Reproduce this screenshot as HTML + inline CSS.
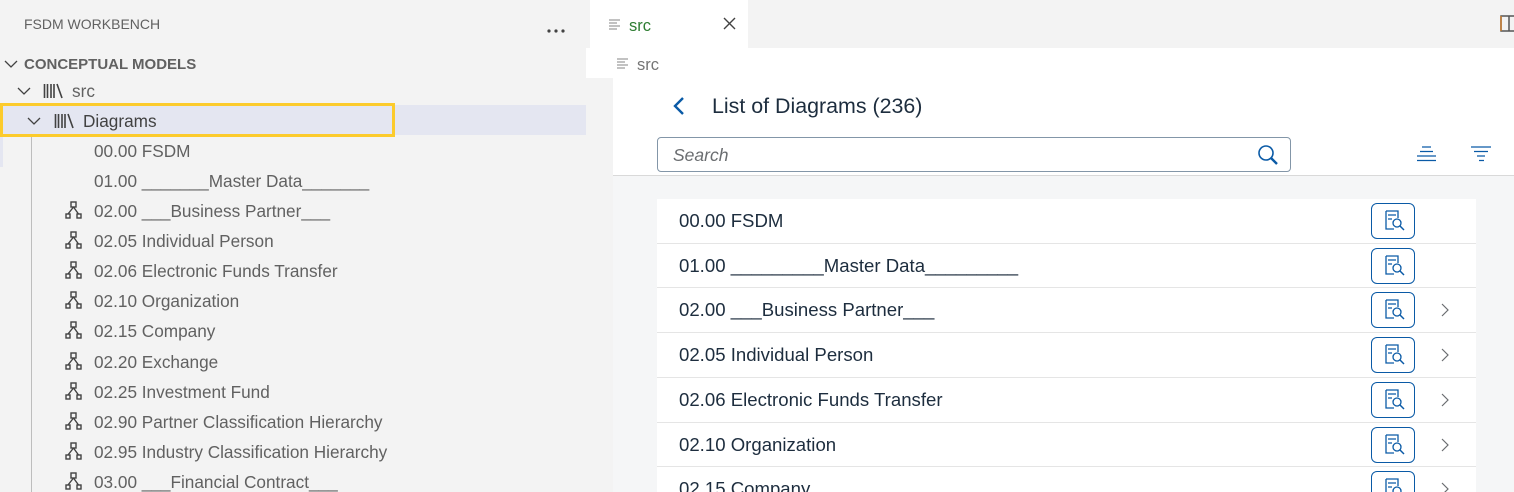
<!DOCTYPE html>
<html><head><meta charset="utf-8"><style>
*{margin:0;padding:0;box-sizing:border-box}
html,body{width:1514px;height:492px;overflow:hidden}
body{background:#f3f3f3;font-family:"Liberation Sans",sans-serif;position:relative}
.a{position:absolute;white-space:nowrap}
.side{position:absolute;left:0;top:0;width:586px;height:492px;background:#f3f3f3;overflow:hidden}
.t{position:absolute;font-size:17.2px;color:#616161;line-height:30px;white-space:nowrap}
.ic{position:absolute}
.row{position:absolute;left:657px;width:819px;background:#fff;border-bottom:1px solid #e5e5e5}
.row span{position:absolute;left:22px;top:11px;font-size:18.6px;color:#1d2d3e}
.btn{position:absolute;left:714px;top:4px;width:44px;height:36px;border:1px solid #0a5aa6;border-radius:6px}
.chev{position:absolute;left:783px;top:15px}
#wrap{position:absolute;left:0;top:0;width:1514px;height:492px;overflow:hidden}
</style></head><body><div id="wrap">
<div class="side">
<div class="a" style="left:24px;top:16px;font-size:14px;color:#616161">FSDM WORKBENCH</div>
<div class="a" style="left:546px;top:21px;"><svg width="22" height="6"><circle cx="3" cy="3" r="1.6" fill="#424242"/><circle cx="10" cy="3" r="1.6" fill="#424242"/><circle cx="17" cy="3" r="1.6" fill="#424242"/></svg></div>
<svg class="ic" style="left:4px;top:59px" width="14" height="10"><path d="M1 2l6 6 6-6" fill="none" stroke="#424242" stroke-width="1.3"/></svg>
<div class="a" style="left:24px;top:56px;font-size:15px;font-weight:bold;color:#616161;line-height:18px">CONCEPTUAL MODELS</div>
<svg class="ic" style="left:17px;top:86px" width="14" height="10"><path d="M1 2l6 6 6-6" fill="none" stroke="#424242" stroke-width="1.3"/></svg>
<svg class="ic" style="left:43px;top:83px" width="22" height="16"><path d="M1.5 1v14M4.5 1v14M8 1v14M11 1v14M14 1l5 14" fill="none" stroke="#424242" stroke-width="1.6"/></svg>
<div class="t" style="left:72px;top:76px">src</div>
<div class="a" style="left:0;top:105px;width:586px;height:30px;background:#e4e6f1"></div>
<div class="a" style="left:0;top:137px;width:3px;height:30px;background:#e4e6f1"></div>
<div class="a" style="left:0;top:103px;width:395px;height:34px;border:3px solid #fccb2c"></div>
<svg class="ic" style="left:27px;top:116px" width="14" height="10"><path d="M1 2l6 6 6-6" fill="none" stroke="#424242" stroke-width="1.3"/></svg>
<svg class="ic" style="left:54px;top:113px" width="22" height="16"><path d="M1.5 1v14M4.5 1v14M8 1v14M11 1v14M14 1l5 14" fill="none" stroke="#424242" stroke-width="1.6"/></svg>
<div class="t" style="left:83px;top:106px;color:#424242">Diagrams</div>
<div class="a" style="left:31px;top:137px;width:1px;height:355px;background:#bdbdbd"></div>
<div class="t" style="left:94px;top:136px">00.00 FSDM</div>
<div class="t" style="left:94px;top:166px">01.00 _______Master Data_______</div>
<div id="tree"></div>
</div>
<div class="a" style="left:590px;top:0;width:158px;height:48px;background:#fff"></div>
<svg class="ic" style="left:609px;top:19px" width="12" height="12"><path d="M0 1h11M0 4h8M0 7h11M0 10h8" stroke="#9e9e9e" stroke-width="1.2"/></svg>
<div class="a" style="left:629px;top:17px;font-size:16.5px;color:#2e7d32">src</div>
<svg class="ic" style="left:723px;top:17px" width="13" height="13"><path d="M1 1l11 11M12 1L1 12" stroke="#424242" stroke-width="1.4"/></svg>
<svg class="ic" style="left:1500px;top:15px" width="14" height="18"><rect x="1" y="1" width="16" height="15" fill="none" stroke="#555" stroke-width="1.5"/><path d="M1 1v15" stroke="#c67a2c" stroke-width="1.5"/><path d="M9 1v15" stroke="#555" stroke-width="1.5"/></svg>
<div class="a" style="left:586px;top:48px;width:928px;height:30px;background:#fff"></div>
<svg class="ic" style="left:617px;top:58px" width="12" height="12"><path d="M0 1h11M0 4h8M0 7h11M0 10h8" stroke="#9e9e9e" stroke-width="1.2"/></svg>
<div class="a" style="left:637px;top:56px;font-size:16.5px;color:#757575">src</div>
<div class="a" style="left:613px;top:78px;width:901px;height:414px;background:#f5f6f7"></div>
<div class="a" style="left:613px;top:78px;width:901px;height:98px;background:#fff;border-bottom:1px solid #d9d9d9"></div>
<svg class="ic" style="left:672px;top:96px" width="14" height="20"><path d="M11 2L3 10l8 8" fill="none" stroke="#0a5aa6" stroke-width="2.4"/></svg>
<div class="a" style="left:712px;top:94px;font-size:21.4px;color:#1d2d3e">List of Diagrams (236)</div>
<div class="a" style="left:657px;top:137px;width:634px;height:35px;border:1px solid #8396a8;border-radius:4px;background:#fff"></div>
<div class="a" style="left:673px;top:145px;font-size:17.5px;font-style:italic;color:#6a6d70">Search</div>
<svg class="ic" style="left:1257px;top:144px" width="24" height="22"><circle cx="9" cy="9" r="7" fill="none" stroke="#0a5aa6" stroke-width="1.6"/><path d="M14 14l6 6" stroke="#0a5aa6" stroke-width="2.4"/></svg>
<svg class="ic" style="left:1416px;top:146px" width="22" height="16"><path d="M6 1h9M4 5.5h13M1 10h19M1 14.5h19" stroke="#0a5aa6" stroke-width="1.2"/></svg>
<svg class="ic" style="left:1470px;top:146px" width="22" height="16"><path d="M1 1h20M4 5.5h14M7 10h8M9 14.5h5" stroke="#0a5aa6" stroke-width="1.2"/></svg>
<div id="list"></div>
</div>
<script>
var tr=["02.00 ___Business Partner___","02.05 Individual Person","02.06 Electronic Funds Transfer","02.10 Organization","02.15 Company","02.20 Exchange","02.25 Investment Fund","02.90 Partner Classification Hierarchy","02.95 Industry Classification Hierarchy","03.00 ___Financial Contract___"];
var h="";
tr.forEach(function(s,i){var y=Math.round(196+i*30.1);
h+='<svg class="ic" style="left:65px;top:'+(y+5)+'px" width="18" height="19"><rect x="6" y="1" width="5" height="5" fill="none" stroke="#424242" stroke-width="1.4"/><path d="M8.5 6L3 13M8.5 6l5 7" stroke="#424242" stroke-width="1.4" fill="none"/><rect x="1" y="13" width="4" height="4" fill="none" stroke="#424242" stroke-width="1.4"/><rect x="12" y="13" width="4" height="4" fill="none" stroke="#424242" stroke-width="1.4"/></svg>';
h+='<div class="t" style="left:94px;top:'+y+'px">'+s+'</div>';});
document.getElementById("tree").outerHTML=h;
var ls=["00.00 FSDM","01.00 _________Master Data_________","02.00 ___Business Partner___","02.05 Individual Person","02.06 Electronic Funds Transfer","02.10 Organization","02.15 Company"];
var g="";
ls.forEach(function(s,i){var y=Math.round(199+i*44.7);var y2=Math.round(199+(i+1)*44.7);
g+='<div class="row" style="top:'+y+'px;height:'+(y2-y)+'px"><span>'+s+'</span><div class="btn"><svg style="position:absolute;left:12px;top:6px" width="22" height="22"><path d="M2 1h12v7M2 1v18h8" fill="none" stroke="#0a5aa6" stroke-width="1.3"/><path d="M4 5h8M4 9h4" stroke="#0a5aa6" stroke-width="1.2"/><circle cx="13" cy="13" r="4" fill="none" stroke="#0a5aa6" stroke-width="1.3"/><path d="M16 16l4 4" stroke="#0a5aa6" stroke-width="1.5"/></svg></div>'+(i>=2?'<svg class="chev" width="10" height="14"><path d="M2 1l6 6-6 6" fill="none" stroke="#6a6d70" stroke-width="1.2"/></svg>':'')+'</div>';});
document.getElementById("list").outerHTML=g;
</script>
</body></html>
